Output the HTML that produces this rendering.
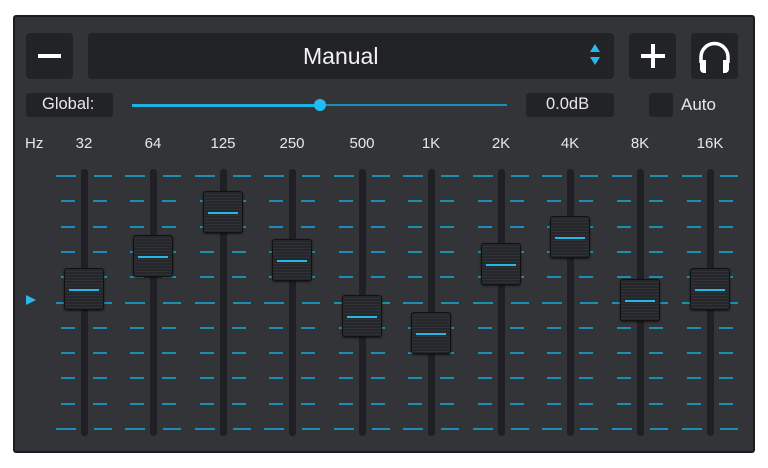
<!DOCTYPE html>
<html><head><meta charset="utf-8"><style>
*{margin:0;padding:0;box-sizing:border-box}
body{width:768px;height:468px;background:#fff;position:relative;overflow:hidden;font-family:"Liberation Sans",sans-serif;color:#eee}
#p{position:absolute;left:13px;top:15px;width:742px;height:438px;background:#333438;border:2px solid #1c1d20;border-radius:3px}
.a{position:absolute}
.btn{background:#222327;border-radius:4px}
.t{position:absolute;font-size:16.5px;color:#e8e8e8}
.tr{position:absolute;width:7px;top:169px;height:267px;background:#1f2023;border-radius:3px}
.d{position:absolute;height:2px;background:#1c8db5}
.k{position:absolute;width:40px;height:42px;border:1px solid #111;border-radius:3px;background:repeating-linear-gradient(#26272b 0 2px,#303136 2px 3px);box-shadow:0 1px 2px rgba(0,0,0,.6)}
.k::after{content:"";position:absolute;left:4px;right:4px;top:20px;height:2px;background:#27b8e8}
</style></head><body>
<div id="p"></div>
<div class="a btn" style="left:26px;top:33px;width:47px;height:46px"></div>
<div class="a" style="left:38px;top:54px;width:23px;height:4px;background:#fff"></div>
<div class="a btn" style="left:88px;top:33px;width:526px;height:46px"></div>
<div class="t" style="left:303px;top:43px;font-size:23px;color:#f2f2f2">Manual</div>
<div class="a" style="left:590px;top:44px;width:0;height:0;border-left:5px solid transparent;border-right:5px solid transparent;border-bottom:8px solid #2ab8ec"></div>
<div class="a" style="left:590px;top:57px;width:0;height:0;border-left:5px solid transparent;border-right:5px solid transparent;border-top:8px solid #2ab8ec"></div>
<div class="a btn" style="left:629px;top:33px;width:47px;height:46px"></div>
<div class="a" style="left:641px;top:54px;width:24px;height:4px;background:#fff"></div>
<div class="a" style="left:651px;top:44px;width:4px;height:24px;background:#fff"></div>
<div class="a btn" style="left:691px;top:33px;width:47px;height:46px"></div>
<svg class="a" style="left:691px;top:33px" width="47" height="46" viewBox="0 0 47 46"><path d="M10 30 V24 A13.5 13.5 0 0 1 37 24 V30" fill="none" stroke="#fff" stroke-width="3.5"/><path d="M9 27 h6 v13 h-2 a4 4 0 0 1 -4 -4z M38 27 h-6 v13 h2 a4 4 0 0 0 4 -4z" fill="#fff"/></svg>
<div class="a btn" style="left:26px;top:93px;width:87px;height:24px;border-radius:3px"></div>
<div class="t" style="left:42px;top:95px">Global:</div>
<div class="a" style="left:132px;top:104px;width:188px;height:3px;background:#1db0e3"></div>
<div class="a" style="left:320px;top:104px;width:187px;height:2px;background:#1a8fb8"></div>
<div class="a" style="left:314px;top:99px;width:12px;height:12px;border-radius:50%;background:#1fbdf2"></div>
<div class="a btn" style="left:526px;top:93px;width:88px;height:24px;border-radius:3px"></div>
<div class="t" style="left:546px;top:95px">0.0dB</div>
<div class="a btn" style="left:649px;top:93px;width:24px;height:24px;border-radius:3px"></div>
<div class="t" style="left:681px;top:95px;font-size:17px">Auto</div>
<div class="t" style="left:25px;top:135px;font-size:15px">Hz</div>
<div class="a" style="left:26px;top:295px;width:0;height:0;border-top:5px solid transparent;border-bottom:5px solid transparent;border-left:10px solid #2ab8ec"></div>
<div id="g"></div>
<script>
var xs=[84,153,223,292,362,431,501,570,640,710],lb=["32","64","125","250","500","1K","2K","4K","8K","16K"],ky=[289,256,212,260,316,333,264,237,300,289],h="";
for(var i=0;i<10;i++){var x=xs[i];
h+='<div class="t" style="left:'+(x-25)+'px;width:50px;text-align:center;top:135px;font-size:15px">'+lb[i]+'</div>';
for(var r=0;r<11;r++){var y=Math.round(175+r*25.3);var L=(r==0||r==5||r==10);
if(L){h+='<div class="d" style="left:'+(x-28)+'px;width:20px;top:'+y+'px"></div><div class="d" style="left:'+(x+10)+'px;width:18px;top:'+y+'px"></div>';}
else{h+='<div class="d" style="left:'+(x-23)+'px;width:14px;top:'+y+'px"></div><div class="d" style="left:'+(x+9)+'px;width:14px;top:'+y+'px"></div>';}}
h+='<div class="tr" style="left:'+(x-3)+'px"></div>';
h+='<div class="k" style="left:'+(x-20)+'px;top:'+(ky[i]-21)+'px"></div>';}
document.getElementById('g').innerHTML=h;
</script>
</body></html>
